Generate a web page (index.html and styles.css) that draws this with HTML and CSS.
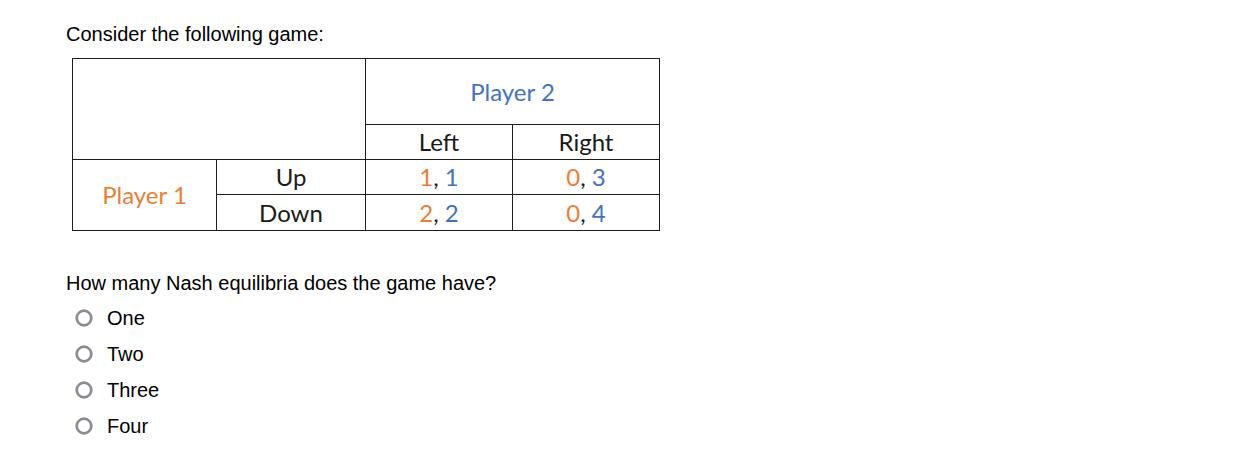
FILE: index.html
```html
<!DOCTYPE html>
<html>
<head>
<meta charset="utf-8">
<link rel="stylesheet" href="styles.css">
</head>
<body>
<div class="page">
  <p class="prompt">Consider the following game:</p>
  <table class="game">
    <colgroup>
      <col class="c1"><col class="c2"><col class="c3"><col class="c4">
    </colgroup>
    <tr class="r1">
      <td colspan="2" rowspan="2"></td>
      <td colspan="2" class="p2">Player 2</td>
    </tr>
    <tr class="r2">
      <td>Left</td>
      <td>Right</td>
    </tr>
    <tr class="r3">
      <td rowspan="2" class="p1">Player 1</td>
      <td>Up</td>
      <td><span class="o">1</span>, <span class="b">1</span></td>
      <td><span class="o">0</span>, <span class="b">3</span></td>
    </tr>
    <tr class="r4">
      <td>Down</td>
      <td><span class="o">2</span>, <span class="b">2</span></td>
      <td><span class="o">0</span>, <span class="b">4</span></td>
    </tr>
  </table>
  <p class="question">How many Nash equilibria does the game have?</p>
  <ul class="options">
    <li class="option"><svg class="radio" viewBox="0 0 18 18"><circle cx="9" cy="9" r="7.3"/></svg><span>One</span></li>
    <li class="option"><svg class="radio" viewBox="0 0 18 18"><circle cx="9" cy="9" r="7.3"/></svg><span>Two</span></li>
    <li class="option"><svg class="radio" viewBox="0 0 18 18"><circle cx="9" cy="9" r="7.3"/></svg><span>Three</span></li>
    <li class="option"><svg class="radio" viewBox="0 0 18 18"><circle cx="9" cy="9" r="7.3"/></svg><span>Four</span></li>
  </ul>
</div>
</body>
</html>
```

FILE: styles.css
```css
html, body {
  margin: 0;
  background: #ffffff;
}
.page {
  padding: 22px 0 0 66px;
  font-family: "Liberation Sans", Arial, sans-serif;
  font-size: 20px;
  color: #000;
}
.prompt {
  margin: 0;
  line-height: 24px;
}
.game {
  margin: 12px 0 0 6px;
  border-collapse: collapse;
  table-layout: fixed;
  width: 588px;
  font-family: "Lato", "Open Sans", sans-serif;
  font-size: 24px;
  color: #1a1a1a;
}
.game td {
  border: 1px solid #1e1e1e;
  padding: 0;
  text-align: center;
  vertical-align: middle;
  line-height: 24px;
}
.c1 { width: 144px; }
.c2 { width: 149px; }
.c3 { width: 147px; }
.c4 { width: 147px; }
.r1 td { height: 65px; }
.r2 td { height: 34px; }
.r3 td { height: 34px; }
.r4 td { height: 35px; }
.p2 { color: #4472c4; }
.p1 { color: #ed7d31; }
.o { color: #ed7d31; }
.b { color: #4472c4; }
.question {
  margin: 40px 0 0 0;
  line-height: 24px;
}
.options {
  list-style: none;
  margin: 11px 0 0 0;
  padding: 0;
  display: flex;
  flex-direction: column;
  gap: 12px;
}
.option {
  display: flex;
  align-items: center;
  gap: 14px;
  line-height: 24px;
  padding-left: 9px;
}
.radio {
  width: 18px;
  height: 18px;
  flex: none;
}
.radio circle {
  fill: #ffffff;
  stroke: #8d8c95;
  stroke-width: 2.7;
}
```
